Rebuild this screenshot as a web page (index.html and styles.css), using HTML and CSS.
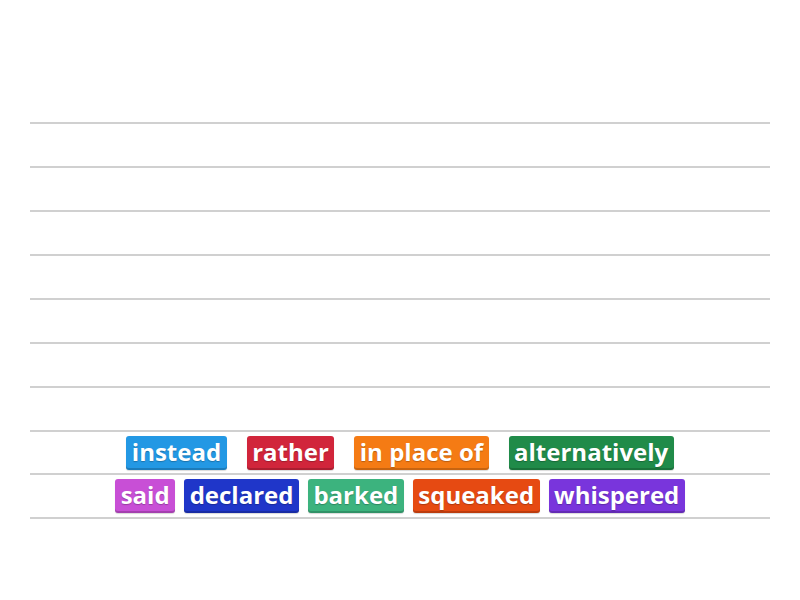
FILE: index.html
```html
<!DOCTYPE html>
<html>
<head>
<meta charset="utf-8">
<link rel="stylesheet" href="styles.css">
</head>
<body>
<div class="board">
  <div class="row"></div>
  <div class="row"></div>
  <div class="row"></div>
  <div class="row"></div>
  <div class="row"></div>
  <div class="row"></div>
  <div class="row"></div>
  <div class="row wide">
    <span class="tile blue">instead</span>
    <span class="tile red">rather</span>
    <span class="tile orange">in place of</span>
    <span class="tile green">alternatively</span>
  </div>
  <div class="row tight last">
    <span class="tile pink">said</span>
    <span class="tile navy">declared</span>
    <span class="tile teal">barked</span>
    <span class="tile vermilion">squeaked</span>
    <span class="tile purple">whispered</span>
  </div>
</div>
</body>
</html>
```
FILE: styles.css
```css
html, body {
  margin: 0;
  padding: 0;
  background: #ffffff;
  font-family: "Open Sans", "Liberation Sans", sans-serif;
}
.board {
  padding: 122px 30px 0 30px;
}
.row {
  height: 42px;
  border-top: 2px solid #d0d0d0;
  display: flex;
  align-items: center;
  justify-content: center;
}
.row.wide {
  height: 41px;
  gap: 20px;
}
.row.tight {
  gap: 9px;
}
.row.last {
  border-bottom: 2px solid #d0d0d0;
}
.tile {
  height: 34px;
  line-height: 32px;
  padding: 0 5.5px;
  font-size: 24px;
  font-weight: 700;
  color: #ffffff;
  border-radius: 3px;
  text-shadow: 0 1px 1px rgba(0,0,0,0.25);
  box-shadow: inset 0 -2px 0 rgba(0,0,0,0.18), 0 1px 1px rgba(0,0,0,0.15);
  white-space: nowrap;
}
.blue { background: #2398e4; }
.red { background: #d1253b; }
.orange { background: #f57b14; }
.green { background: #208b49; }
.pink { background: #c84fd6; }
.navy { background: #1f36c9; }
.teal { background: #3cb37e; }
.vermilion { background: #e64a12; }
.purple { background: #7935dc; }
```
